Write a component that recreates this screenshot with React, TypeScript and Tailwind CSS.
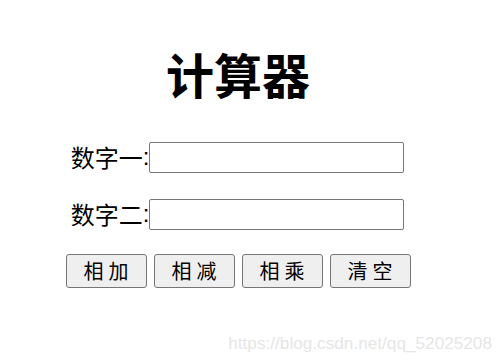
const font = "font-['Microsoft_YaHei','Noto_Sans_CJK_SC',sans-serif]";

const NumberRow = ({ label }: { label: string }) => (
    <div className="flex items-center h-[30px]">
        <span className={`text-[24px] leading-none text-black ${font}`}>{label}</span>
        <span className="text-[24px] leading-none text-black font-['Liberation_Sans',sans-serif]">:</span>
        <input
            type="text"
            className="w-[255px] h-[31px] border border-[#767676] rounded-[2px] bg-white outline-none px-1"
        />
    </div>
);

const Btn = ({ text }: { text: string }) => (
    <button
        className={`w-[81px] h-[34px] bg-[#efefef] border border-[#767676] rounded-[3px] text-[20px] leading-none tracking-[5px] pl-[5px] text-black ${font}`}
    >
        {text}
    </button>
);

export default function App() {
    return (
        <div className="relative w-[501px] h-[360px] bg-white overflow-hidden">
            <div className="w-[476px] flex flex-col items-center pt-[45px]">
                <h1 className={`text-[48px] leading-[56px] font-bold text-black ${font}`}>计算器</h1>

                <div className="flex flex-col items-center gap-[27px] mt-[41px] pr-[1px]">
                    <NumberRow label="数字一" />
                    <NumberRow label="数字二" />
                </div>

                <div className="flex gap-[7px] mt-[25px]">
                    <Btn text="相加" />
                    <Btn text="相减" />
                    <Btn text="相乘" />
                    <Btn text="清空" />
                </div>
            </div>

            {/* csdn watermark */}
            <span className="absolute right-[9px] bottom-[8px] text-[17.2px] leading-none text-[#e6e6e6] font-['Liberation_Sans',sans-serif]">
                https://blog.csdn.net/qq_52025208
            </span>
        </div>
    );
}
